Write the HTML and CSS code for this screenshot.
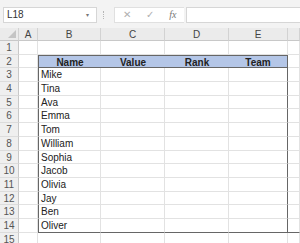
FILE: index.html
```html
<!DOCTYPE html>
<html lang="en">
<head>
  <meta charset="UTF-8">
  <title>Sheet</title>
  <link rel="stylesheet" href="styles.css">
</head>
<body>
  <div class="toolbar">
    <div class="name-box">L18<span class="arrow">&#9662;</span></div>
    <div class="grip"></div>
    <div class="fx-box">
      <span class="fx-btn">&#10005;</span>
      <span class="fx-btn">&#10003;</span>
      <span class="fx-btn fx">fx</span>
    </div>
    <div class="formula"></div>
  </div>

  <div class="sheet">
    <div class="row head">
      <div class="corner"><span class="tri"></span></div>
      <div class="col">A</div><div class="col">B</div><div class="col">C</div>
      <div class="col">D</div><div class="col">E</div><div class="col"></div>
    </div>
    <div class="row"><div class="num">1</div><div></div><div></div><div></div><div></div><div></div><div></div></div>
    <div class="row"><div class="num">2</div><div></div>
      <div class="th">Name</div><div class="th">Value</div><div class="th">Rank</div><div class="th">Team</div><div></div></div>
    <div class="row"><div class="num">3</div><div></div><div class="name">Mike</div><div></div><div></div><div></div><div></div></div>
    <div class="row"><div class="num">4</div><div></div><div class="name">Tina</div><div></div><div></div><div></div><div></div></div>
    <div class="row"><div class="num">5</div><div></div><div class="name">Ava</div><div></div><div></div><div></div><div></div></div>
    <div class="row"><div class="num">6</div><div></div><div class="name">Emma</div><div></div><div></div><div></div><div></div></div>
    <div class="row"><div class="num">7</div><div></div><div class="name">Tom</div><div></div><div></div><div></div><div></div></div>
    <div class="row"><div class="num">8</div><div></div><div class="name">William</div><div></div><div></div><div></div><div></div></div>
    <div class="row"><div class="num">9</div><div></div><div class="name">Sophia</div><div></div><div></div><div></div><div></div></div>
    <div class="row"><div class="num">10</div><div></div><div class="name">Jacob</div><div></div><div></div><div></div><div></div></div>
    <div class="row"><div class="num">11</div><div></div><div class="name">Olivia</div><div></div><div></div><div></div><div></div></div>
    <div class="row"><div class="num">12</div><div></div><div class="name">Jay</div><div></div><div></div><div></div><div></div></div>
    <div class="row"><div class="num">13</div><div></div><div class="name">Ben</div><div></div><div></div><div></div><div></div></div>
    <div class="row last"><div class="num">14</div><div></div><div class="name">Oliver</div><div></div><div></div><div></div><div></div></div>
    <div class="row"><div class="num">15</div><div></div><div></div><div></div><div></div><div></div><div></div></div>
  </div>
</body>
</html>
```

FILE: styles.css
```css
body {
  margin: 0;
  width: 300px;
  height: 243px;
  overflow: hidden;
  background: #fff;
  font-family: 'Liberation Sans', Arial, sans-serif;
  font-size: 10px;
  color: #222;
}

/* formula bar */
.toolbar {
  height: 28px;
  background: #f3f3f3;
  display: flex;
  align-items: flex-start;
  padding-top: 7px;
  box-sizing: border-box;
}

.name-box {
  margin-left: 3px;
  width: 94px;
  height: 16px;
  box-sizing: border-box;
  background: #fff;
  border: 1px solid #d6d6d6;
  padding-left: 3px;
  line-height: 14px;
  color: #333;
  display: flex;
  justify-content: space-between;
}

.arrow {
  font-size: 6px;
  color: #777;
  padding-right: 7px;
}

.grip {
  width: 2px;
  height: 8px;
  margin: 4px 0 0 6px;
  border-left: 1px dotted #b5b5b5;
}

.fx-box {
  margin-left: 8px;
  width: 70px;
  height: 16px;
  box-sizing: border-box;
  background: #fff;
  border: 1px solid #e0e0e0;
  border-right: none;
  display: flex;
  justify-content: space-around;
  line-height: 14px;
}

.fx-btn {
  color: #b0b0b0;
  font-size: 10px;
}

.fx {
  font-family: 'Liberation Serif', serif;
  font-style: italic;
  color: #777;
}

.formula {
  flex: 1;
  height: 16px;
  box-sizing: border-box;
  background: #fff;
  border: 1px solid #d6d6d6;
  border-right: none;
  margin-left: 2px;
}

/* grid */
.row {
  display: grid;
  grid-template-columns: 19px 19px 63px 64px 64px 59px 1fr;
  height: 13.7px;
}

.row > div {
  box-sizing: border-box;
  border-right: 1px solid #e2e2e2;
  border-bottom: 1px solid #e2e2e2;
  line-height: 13px;
  white-space: nowrap;
  overflow: hidden;
}

.row.head {
  height: 13px;
}

.row.head > div {
  background: #ebebeb;
  border-right: 1px solid #d2d2d2;
  border-bottom: 1px solid #c8c8c8;
  text-align: center;
  color: #444;
}

.corner {
  display: flex;
  align-items: flex-end;
  justify-content: flex-end;
  padding: 0 2px 2px 0;
}

.tri {
  width: 0;
  height: 0;
  border-left: 8px solid transparent;
  border-bottom: 8px solid #c4c4c4;
}

.row > .num {
  background: #efefef;
  border-right: 1px solid #c8c8c8;
  border-bottom: 1px solid #dcdcdc;
  text-align: center;
  color: #555;
}

.row > .th {
  background: #b4c6e7;
  font-weight: bold;
  text-align: center;
  color: #222;
  border-top: 1px solid #666;
  border-bottom: 1px solid #666;
  border-right: none;
}

.row > .th:nth-child(3) {
  border-left: 1px solid #666;
}

.row > .th:nth-child(6) {
  border-right: 1px solid #666;
}

.row > .name {
  padding-left: 2px;
  border-left: 1px solid #666;
}

.row.body > div:nth-child(6),
.row > .name ~ div:nth-child(6) {
  border-right: 1px solid #666;
}

.row.last > div:nth-child(n+3) {
  border-bottom: 1px solid #666;
}
```
